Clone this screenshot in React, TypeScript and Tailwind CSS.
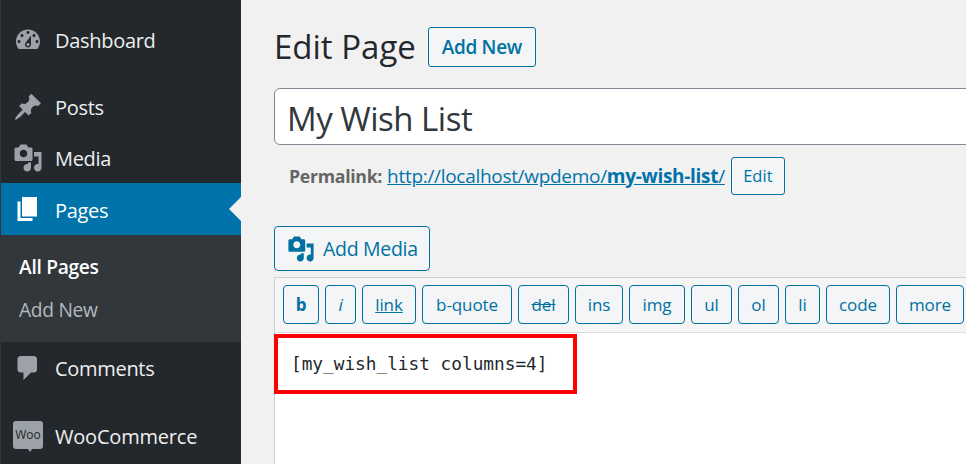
const sans = "font-['Open_Sans',sans-serif]";

const icons = {
    dashboard: "M3.76 16h12.48c1.1-1.37 1.76-3.11 1.76-5 0-4.42-3.58-8-8-8s-8 3.58-8 8c0 1.89.66 3.63 1.76 5zM10 4c.55 0 1 .45 1 1s-.45 1-1 1-1-.45-1-1 .45-1 1-1zM6 6c.55 0 1 .45 1 1s-.45 1-1 1-1-.45-1-1 .45-1 1-1zm8 0c.55 0 1 .45 1 1s-.45 1-1 1-1-.45-1-1 .45-1 1-1zm-5.37 5.55L12 7v6c0 1.1-.9 2-2 2s-2-.9-2-2c0-.57.24-1.08.63-1.45zM4 10c.55 0 1 .45 1 1s-.45 1-1 1-1-.45-1-1 .45-1 1-1zm12 0c.55 0 1 .45 1 1s-.45 1-1 1-1-.45-1-1 .45-1 1-1zm-5 3c0-.55-.45-1-1-1s-1 .45-1 1 .45 1 1 1 1-.45 1-1z",
    post: "M10.44 3.02l1.82-1.82 6.36 6.35-1.83 1.82c-1.05-.68-2.48-.57-3.41.36l-.75.75c-.92.93-1.04 2.35-.35 3.41l-1.83 1.82-2.41-2.41-2.8 2.79c-.42.42-3.38 2.71-3.8 2.29s1.86-3.39 2.28-3.81l2.79-2.79L4.1 9.36l1.83-1.82c1.05.69 2.48.57 3.4-.36l.75-.75c.93-.92 1.05-2.35.36-3.41z",
    media: "M13 11V4c0-.55-.45-1-1-1h-1.67L9 1H5L3.67 3H2c-.55 0-1 .45-1 1v7c0 .55.45 1 1 1h10c.55 0 1-.45 1-1zM7 4.5c1.38 0 2.5 1.12 2.5 2.5S8.38 9.5 7 9.5 4.5 8.38 4.5 7 5.62 4.5 7 4.5zM14 6h5v10.5c0 1.38-1.12 2.5-2.5 2.5S14 17.88 14 16.5s1.12-2.5 2.5-2.5c.17 0 .34.02.5.05V9h-3V6zm-4 8.05V13h2v3.5c0 1.38-1.12 2.5-2.5 2.5S7 17.88 7 16.5 8.12 14 9.5 14c.17 0 .34.02.5.05z",
    page: "M6 15V2h10v13H6zm-1 1h8v2H3V5h2v11z",
    comments: "M5 2h9c1.1 0 2 .9 2 2v7c0 1.1-.9 2-2 2h-2l-5 5v-5H5c-1.1 0-2-.9-2-2V4c0-1.1.9-2 2-2z",
};

function Dashicon({ d, className }: { d: string; className: string }) {
    return (
        <svg viewBox="0 0 20 20" className={className} fill="currentColor" fillRule="evenodd">
            <path d={d} />
        </svg>
    );
}

function MenuItem({ icon, label, className = '' }: { icon: string; label: string; className?: string }) {
    return (
        <div className={`flex items-center text-[#eee] ${className}`}>
            <div className="w-[55px] pl-[12px] shrink-0">
                <Dashicon d={icon} className="w-[30px] h-[30px] text-[#9ca2a7]" />
            </div>
            <span className="text-[20px] tracking-[-0.3px] pt-[2px] -ml-px">{label}</span>
        </div>
    );
}

const quicktags = [
    { label: 'b', w: 'w-[36px]', cls: 'font-bold' },
    { label: 'i', w: 'w-[31px]', cls: 'italic' },
    { label: 'link', w: 'w-[54px]', cls: 'underline' },
    { label: 'b-quote', w: 'w-[90px]', cls: '' },
    { label: 'del', w: 'w-[51px]', cls: 'line-through' },
    { label: 'ins', w: 'w-[48px]', cls: '' },
    { label: 'img', w: 'w-[56px]', cls: '' },
    { label: 'ul', w: 'w-[41px]', cls: '' },
    { label: 'ol', w: 'w-[41px]', cls: '' },
    { label: 'li', w: 'w-[35px]', cls: '' },
    { label: 'code', w: 'w-[64px]', cls: '' },
    { label: 'more', w: 'w-[68px]', cls: '' },
];

export default function App() {
    return (
        <div className={`flex w-[966px] h-[464px] overflow-hidden bg-[#f1f1f1] ${sans}`}>
            {/* Sidebar */}
            <div className="w-[241px] shrink-0 bg-[#23282d] pt-[14px] border-l border-[#32373c]">
                <MenuItem icon={icons.dashboard} label="Dashboard" className="h-[52px] mb-[15px]" />
                <MenuItem icon={icons.post} label="Posts" className="h-[51px]" />
                <MenuItem icon={icons.media} label="Media" className="h-[51px]" />
                <div className="relative">
                    <MenuItem icon={icons.page} label="Pages" className="h-[52px] bg-[#0073aa] text-white [&_svg]:text-white [&_span]:pt-[3px]" />
                    <div className="absolute right-0 top-[14px] border-y-[12px] border-r-[12px] border-y-transparent border-r-[#f1f1f1]" />
                </div>
                <div className="h-[107px] bg-[#32373c] pl-[18px] pt-[11px] text-[19.2px] tracking-[-0.3px]">
                    <div className="h-[43px] flex items-center font-semibold text-white">All Pages</div>
                    <div className="h-[43px] flex items-center text-[#b4b9be]">Add New</div>
                </div>
                <MenuItem icon={icons.comments} label="Comments" className="h-[52px] mb-[16px]" />
                <div className="flex items-center h-[52px] text-[#eee]">
                    <div className="w-[54px] pl-[12px] shrink-0">
                        <svg viewBox="0 0 30 31" className="w-[30px] h-[31px]">
                            <path d="M3 0h24a3 3 0 0 1 3 3v22a3 3 0 0 1-3 3h-8l-2 3-2-3H3a3 3 0 0 1-3-3V3a3 3 0 0 1 3-3z" fill="#9ca2a7" />
                            <text x="15" y="18" textAnchor="middle" fontSize="12" fill="#23282d">Woo</text>
                        </svg>
                    </div>
                    <span className="text-[20px] tracking-[-0.2px] pt-[2px]">WooCommerce</span>
                </div>
            </div>

            {/* Main */}
            <div className="flex-1 min-w-0 pl-[33px] pt-[27px]">
                <div className="flex items-center h-[40px]">
                    <h1 className="text-[33px] text-[#23282d]">Edit Page</h1>
                    <button className="ml-[12px] w-[108px] h-[40px] rounded-[3px] border border-[#0071a1] bg-[#f3f5f6] text-[#0071a1] text-[19px] font-semibold tracking-[-0.3px]">Add New</button>
                </div>

                <div className="mt-[21px] w-[760px] h-[57px] rounded-[6px] border border-[#7e8993] bg-white pl-[12px] pt-[5px] flex items-center text-[33px] text-[#32373c] tracking-[-0.5px]">My Wish List</div>

                <div className="mt-[11px] flex items-center h-[40px] pl-[15px] text-[#666] whitespace-nowrap">
                    <span className="font-bold text-[17.7px] tracking-[-0.3px]">Permalink:</span>
                    <a className="ml-[5px] underline text-[#0073aa] text-[19px] tracking-[-0.3px]">http://localhost/wpdemo/<span className="font-bold">my-wish-list</span>/</a>
                    <button className="ml-[6px] w-[54px] h-[38px] rounded-[3px] border border-[#0071a1] bg-[#f3f5f6] text-[#0071a1] text-[16.5px]">Edit</button>
                </div>

                <button className="mt-[30px] flex items-center w-[156px] h-[45px] rounded-[4px] border border-[#0071a1] bg-[#f3f5f6] text-[#0071a1] text-[19.5px] tracking-[-0.3px] pl-[12px]">
                    <Dashicon d={icons.media} className="w-[28px] h-[28px] mr-[8px]" />
                    <span className="pt-[1px]">Add Media</span>
                </button>

                {/* Editor */}
                <div className="mt-[6px] w-[760px] border-l border-t border-[#ccd0d4] bg-white h-[200px]">
                    <div className="flex gap-[6px] h-[55px] pl-[8px] pt-[7px] bg-[#f5f5f5] border-b border-[#dcdcde]">
                        {quicktags.map((q) => (
                            <div key={q.label} className={`shrink-0 flex items-center justify-center h-[39px] rounded-[4px] border border-[#0071a1] bg-[#f3f5f6] text-[#0071a1] text-[17px] tracking-[-0.1px] ${q.w} ${q.cls}`}>
                                {q.label}
                            </div>
                        ))}
                    </div>
                    <div className="w-[303px] h-[60px] border-[4px] border-[#ff0000] -ml-px mt-px flex items-center pl-[13px] font-['DejaVu_Sans_Mono',monospace] text-[17.75px] text-[#23282d]">
                        [my_wish_list columns=4]
                    </div>
                </div>
            </div>
        </div>
    );
}
